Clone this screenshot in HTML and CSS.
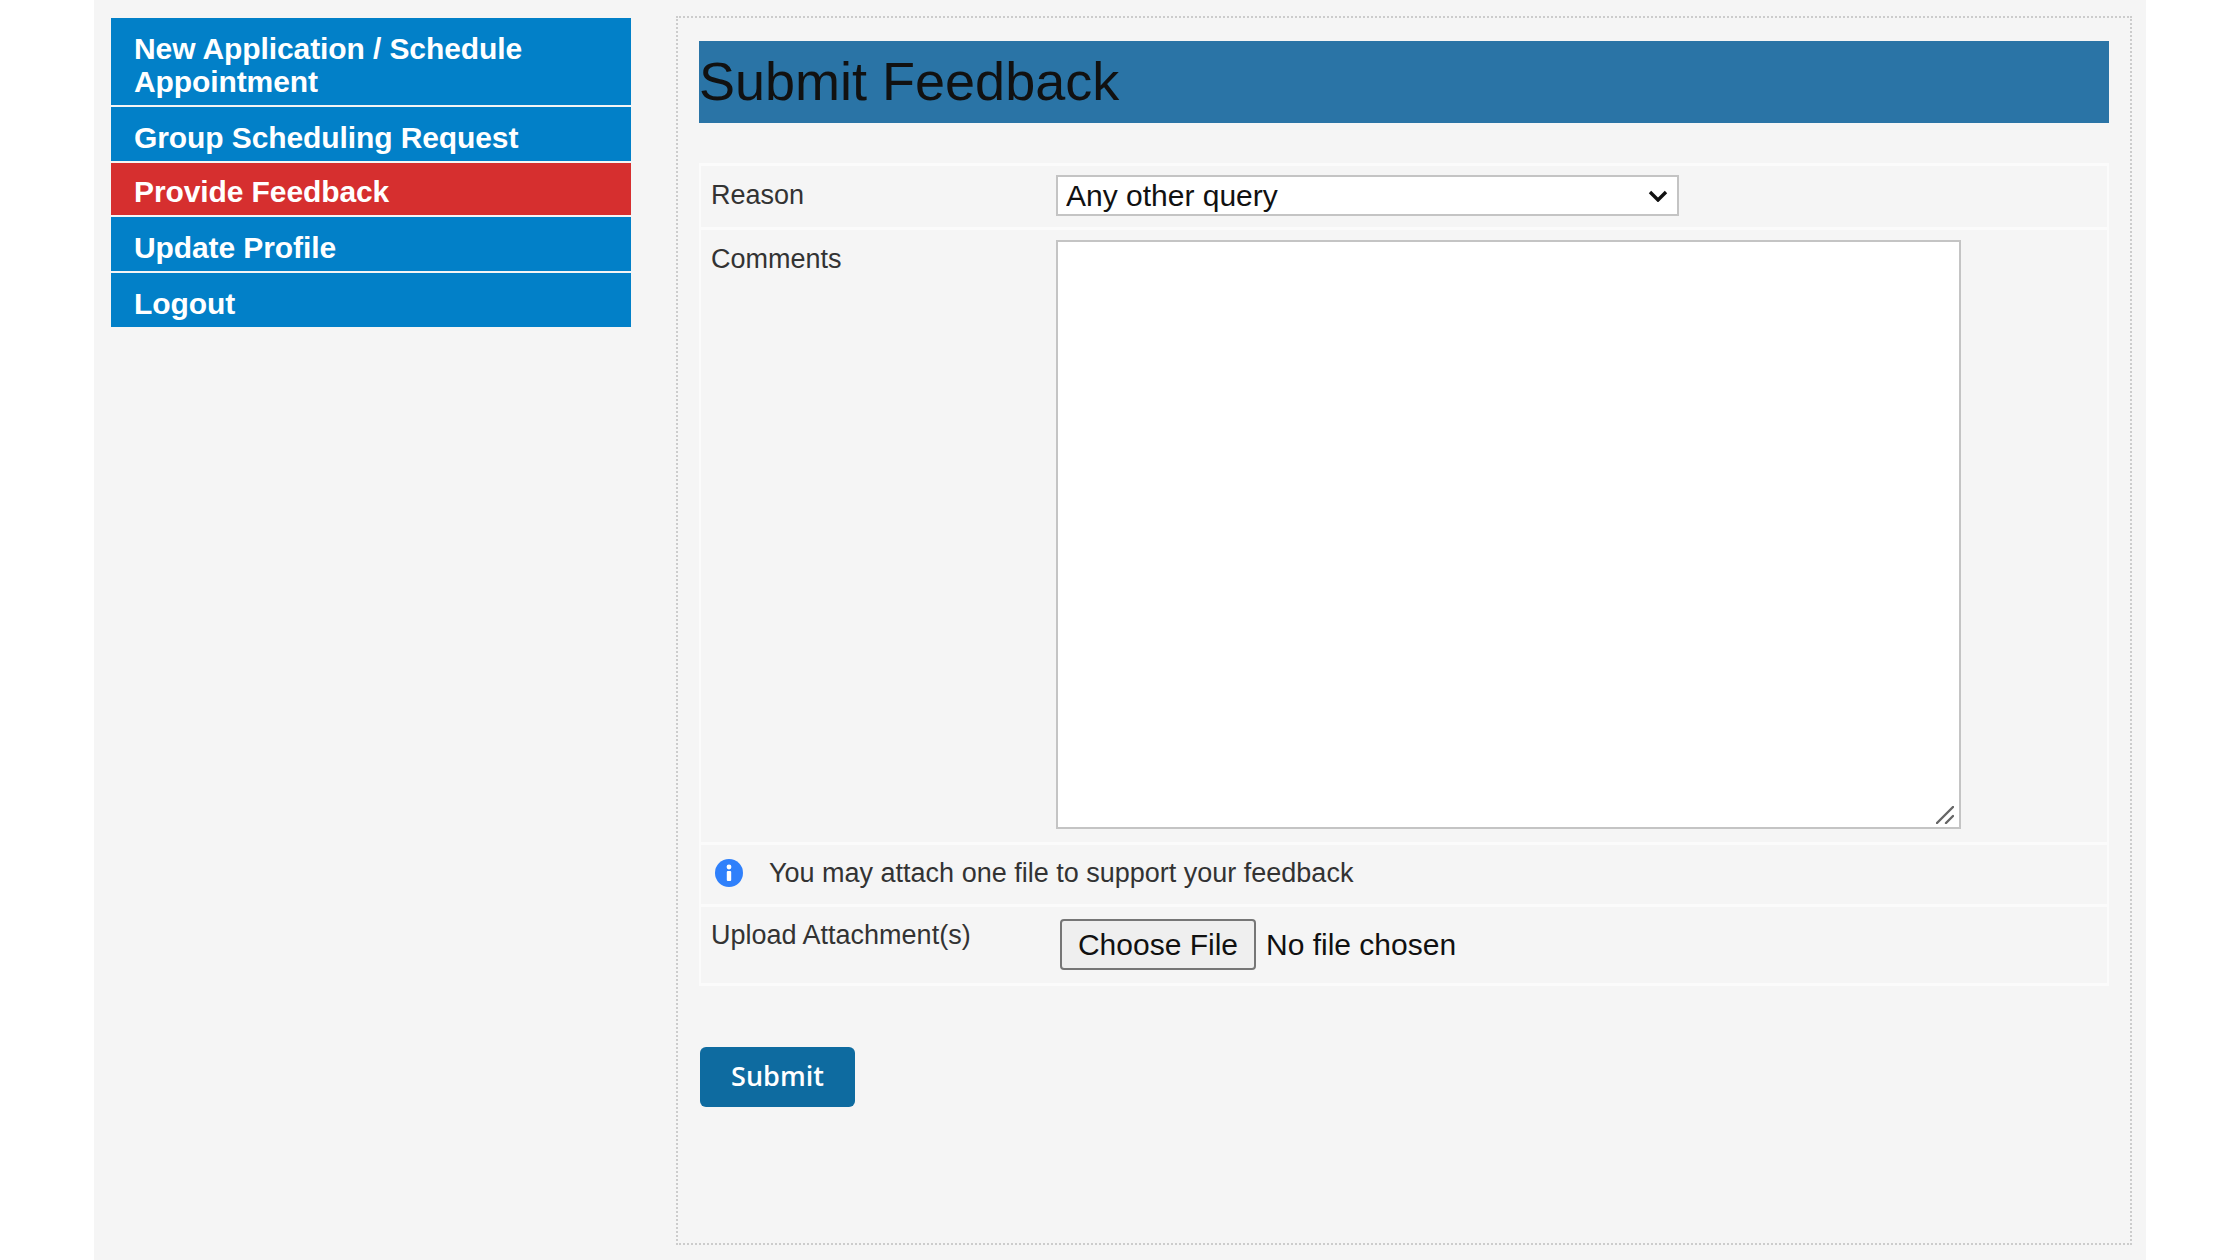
FILE: index.html
```html
<!DOCTYPE html>
<html lang="en">
<head>
  <meta charset="UTF-8">
  <title>Submit Feedback</title>
  <link rel="stylesheet" href="styles.css">
</head>
<body>
  <div class="wrapper">
    <ul class="side-menu">
      <li><a href="#">New Application / Schedule Appointment</a></li>
      <li><a href="#">Group Scheduling Request</a></li>
      <li class="active"><a href="#">Provide Feedback</a></li>
      <li><a href="#">Update Profile</a></li>
      <li><a href="#">Logout</a></li>
    </ul>

    <div class="panel">
      <h1>Submit Feedback</h1>
      <form class="form-table">
        <div class="form-row reason-row">
          <label for="reason">Reason</label>
          <div class="select-wrap">
            <select id="reason">
              <option>Any other query</option>
            </select>
            <svg class="chevron" viewBox="0 0 20 12" width="20" height="12">
              <path d="M2 2l8 8 8-8" stroke="#111" stroke-width="3.4" fill="none"/>
            </svg>
          </div>
        </div>
        <div class="form-row comments-row">
          <label for="comments">Comments</label>
          <div class="textarea-wrap">
            <textarea id="comments"></textarea>
            <svg class="grip" viewBox="0 0 18 18" width="18" height="18">
              <path d="M1 17 17 1M10 17l7-7" stroke="#666" stroke-width="2.4" stroke-linecap="round" fill="none"/>
            </svg>
          </div>
        </div>
        <div class="info-row">
          <svg class="info-icon" viewBox="0 0 28 28" width="28" height="28">
            <circle cx="14" cy="14" r="14" fill="#2f80fb"/>
            <circle cx="14" cy="8" r="2.4" fill="#fff"/>
            <rect x="11.8" y="12" width="4.4" height="10" rx="1" fill="#fff"/>
          </svg>
          <span>You may attach one file to support your feedback</span>
        </div>
        <div class="form-row upload-row">
          <label>Upload Attachment(s)</label>
          <div class="file-field">
            <button type="button" class="choose-btn">Choose File</button>
            <span>No file chosen</span>
          </div>
        </div>
      </form>
      <button type="button" class="submit-btn">Submit</button>
    </div>
  </div>
</body>
</html>
```

FILE: styles.css
```css
body {
  margin: 0;
  background: #fff;
  font-family: "Liberation Sans", Arial, sans-serif;
  color: #333;
}

.wrapper {
  display: flex;
  align-items: flex-start;
  margin: 0 94px;
  height: 1260px;
  padding: 16px 14px 0 17px;
  box-sizing: border-box;
  background: #f5f5f5;
}

.side-menu {
  flex: none;
  display: flex;
  flex-direction: column;
  gap: 2px;
  width: 520px;
  margin: 2px 45px 0 0;
  padding: 0;
  list-style: none;
}

.side-menu li {
  padding: 14px 22px 7px 23px;
  background: #0280c8;
}

.side-menu li.active {
  padding: 12px 22px 7px 23px;
  background: #d62f2f;
}

.side-menu a {
  display: block;
  color: #fff;
  font-size: 30px;
  font-weight: bold;
  letter-spacing: -0.1px;
  line-height: 33px;
  text-decoration: none;
}

.panel {
  flex: 1;
  height: 1229px;
  box-sizing: border-box;
  padding: 23px 21px 0;
  border: 2px dotted #ccc;
}

h1 {
  height: 82px;
  margin: 0 0 40px;
  background: #2a74a6;
  color: #111;
  font-size: 54px;
  font-weight: normal;
  line-height: 81px;
}

.form-table {
  display: flex;
  flex-direction: column;
  gap: 3px;
  padding: 3px 2px;
  background: #fbfbfb;
}

.form-row {
  display: grid;
  grid-template-columns: 355px 1fr;
  background: #f5f5f5;
}

.form-row label {
  padding-left: 10px;
  font-size: 27px;
  line-height: 32px;
}

.reason-row {
  align-items: center;
  height: 61px;
  padding-top: 9px;
  padding-bottom: 11px;
  box-sizing: border-box;
}

.reason-row label {
  margin-top: -2px;
}

.select-wrap {
  position: relative;
  width: 623px;
  height: 41px;
}

select {
  display: block;
  width: 100%;
  height: 100%;
  padding: 0 0 0 8px;
  border: 2px solid #c4c4c4;
  border-radius: 0;
  background: #fff;
  color: #111;
  font-family: inherit;
  font-size: 30px;
  appearance: none;
}

.chevron {
  position: absolute;
  right: 11px;
  top: 15px;
}

.comments-row {
  padding: 10px 0 13px;
}

.comments-row label {
  padding-top: 3px;
}

.textarea-wrap {
  position: relative;
  width: 905px;
  height: 589px;
}

textarea {
  display: block;
  width: 100%;
  height: 100%;
  box-sizing: border-box;
  border: 2px solid #c4c4c4;
  background: #fff;
  resize: none;
}

.grip {
  position: absolute;
  right: 7px;
  bottom: 5px;
}

.info-row {
  display: flex;
  align-items: center;
  gap: 26px;
  height: 59px;
  padding: 0 0 3px 14px;
  box-sizing: border-box;
  background: #f5f5f5;
  font-size: 27px;
}

.upload-row {
  padding: 12px 0 13px;
}

.file-field {
  display: flex;
  align-items: center;
  gap: 10px;
  margin-left: 4px;
  color: #111;
  font-size: 30px;
}

.choose-btn {
  width: 196px;
  height: 51px;
  padding: 0;
  border: 2px solid #767676;
  border-radius: 4px;
  background: #efefef;
  color: #111;
  font-family: inherit;
  font-size: 30px;
}

.submit-btn {
  display: block;
  width: 155px;
  height: 60px;
  margin: 61px 0 0 1px;
  padding: 0 0 3px;
  border: none;
  border-radius: 6px;
  background: #0e6ba0;
  color: #fff;
  font-family: "Open Sans", sans-serif;
  font-size: 27px;
  font-weight: 600;
}
```
